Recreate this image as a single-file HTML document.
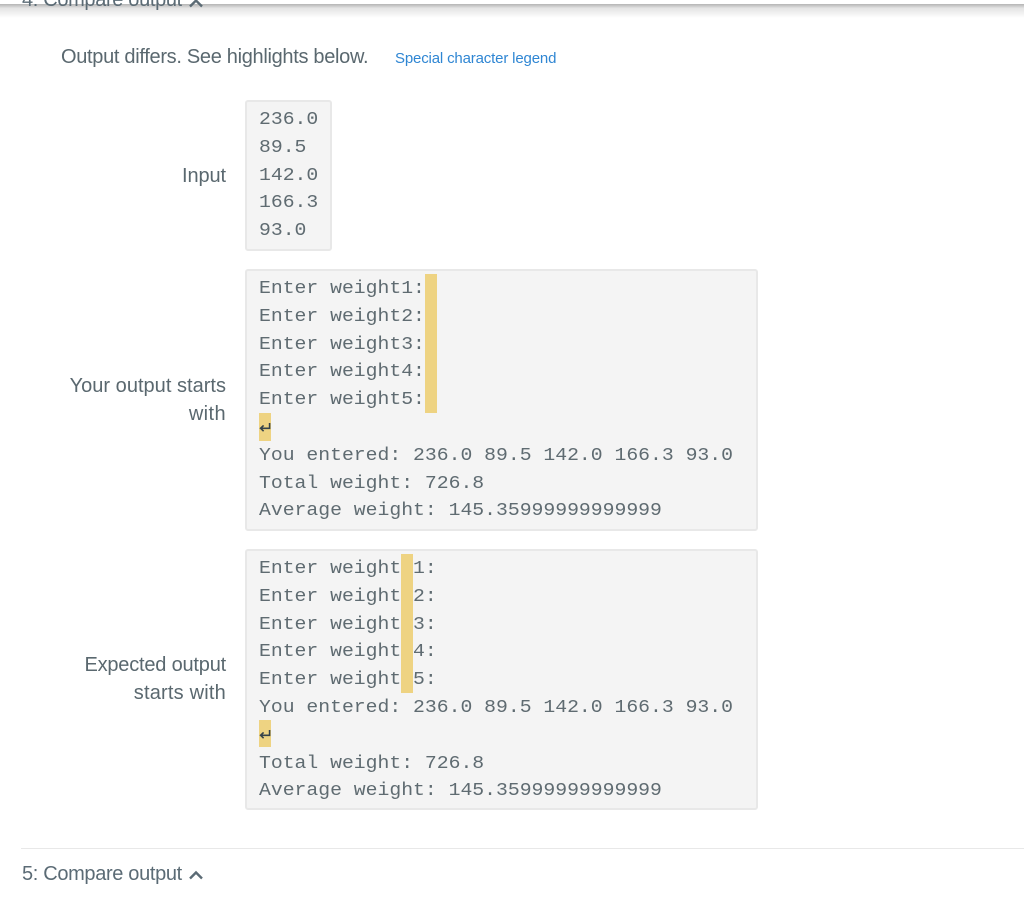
<!DOCTYPE html>
<html><head><meta charset="utf-8"><style>
html,body{margin:0;padding:0;background:#fff;width:1024px;height:907px;overflow:hidden}
body{position:relative;font-family:"Liberation Sans",sans-serif;color:#4a5960}
.a{position:absolute;white-space:pre}
.box{position:absolute;left:245px;background:#f4f4f4;border:2px solid #e8e8e8;border-radius:3px;box-sizing:border-box}
.m{position:absolute;left:259px;font:18px/27.8px "Liberation Mono",monospace;white-space:pre;color:#5f6b71;transform:scaleX(1.097);transform-origin:0 0}
.hl{position:absolute;background:#eed382}
.l{font-size:20px;line-height:28px;text-align:right;right:798px;color:#5a686f}
</style></head><body>
<div class="a" style="left:0;top:4px;width:1024px;height:14px;background:linear-gradient(#b4b4b4,#e4e4e4 30%,#fff)"></div>
<div class="a" style="left:22px;top:-12px;font-size:20px;line-height:24px;letter-spacing:-.34px;color:#5b6b75">4: Compare output</div>
<svg class="a" style="left:188px;top:-3px" width="16" height="12" viewBox="0 0 16 12"><path d="M2 9.5L8 3.5L14 9.5" fill="none" stroke="#5b6b75" stroke-width="2.4"/></svg>

<div class="a" style="left:61px;top:43px;font-size:20px;line-height:28px;letter-spacing:-.31px;color:#5a686f">Output differs. See highlights below.</div>
<div class="a" style="left:395px;top:49px;font-size:15px;line-height:20px;letter-spacing:-.16px;color:#2f86d3">Special character legend</div>

<div class="a l" style="top:162px;letter-spacing:-.1px">Input</div>
<div class="box" style="top:100px;width:87px;height:151px"></div>
<div class="m" style="top:107px">236.0
89.5
142.0
166.3
93.0</div>

<div class="a l" style="top:372px;letter-spacing:.02px">Your output starts</div>
<div class="a l" style="top:400px;letter-spacing:.4px">with</div>
<div class="box" style="top:269px;width:513px;height:262px"></div>
<div class="hl" style="left:425px;top:274px;width:12px;height:139px"></div>
<div class="hl" style="left:259px;top:413px;width:12px;height:28px"></div>
<svg class="a" style="left:259px;top:421px" width="12" height="13" viewBox="0 0 12 13"><path d="M10.6 2V7.3H2M4.6 4.4L1.6 7.3L4.6 10.2" fill="none" stroke="#36434a" stroke-width="1.6"/></svg>
<div class="m" style="top:276px">Enter weight1:
Enter weight2:
Enter weight3:
Enter weight4:
Enter weight5:

You entered: 236.0 89.5 142.0 166.3 93.0
Total weight: 726.8
Average weight: 145.35999999999999</div>

<div class="a l" style="top:651px;letter-spacing:-.2px">Expected output</div>
<div class="a l" style="top:679px;letter-spacing:.2px">starts with</div>
<div class="box" style="top:549px;width:513px;height:261px"></div>
<div class="hl" style="left:401px;top:554px;width:12px;height:139px"></div>
<div class="hl" style="left:259px;top:720px;width:12px;height:27px"></div>
<svg class="a" style="left:259px;top:728px" width="12" height="13" viewBox="0 0 12 13"><path d="M10.6 2V7.3H2M4.6 4.4L1.6 7.3L4.6 10.2" fill="none" stroke="#36434a" stroke-width="1.6"/></svg>
<div class="m" style="top:556px">Enter weight 1:
Enter weight 2:
Enter weight 3:
Enter weight 4:
Enter weight 5:
You entered: 236.0 89.5 142.0 166.3 93.0

Total weight: 726.8
Average weight: 145.35999999999999</div>

<div class="a" style="left:21px;top:848px;width:1003px;height:1px;background:#e8e8e8"></div>
<div class="a" style="left:22px;top:860px;font-size:20px;line-height:28px;letter-spacing:-.34px;color:#5b6b75">5: Compare output</div>
<svg class="a" style="left:188px;top:869px" width="16" height="12" viewBox="0 0 16 12"><path d="M2 9.5L8 3.5L14 9.5" fill="none" stroke="#5b6b75" stroke-width="2.4"/></svg>
</body></html>
